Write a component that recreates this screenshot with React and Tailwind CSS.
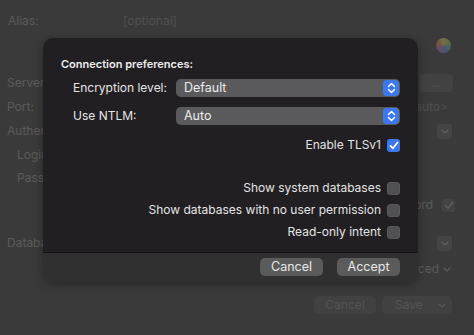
import React from "react";

const font = { fontFamily: "Inter, 'Noto Sans', sans-serif" };

function Stepper() {
  return (
    <div className="w-[16px] h-[16px] rounded-[4px] bg-[#3a78ec] flex items-center justify-center">
      <svg width="9" height="12" viewBox="0 0 9 12" fill="none">
        <path d="M1.5 4.5 L4.5 1.5 L7.5 4.5" stroke="white" strokeWidth="1.5" strokeLinecap="round" strokeLinejoin="round" />
        <path d="M1.5 7.5 L4.5 10.5 L7.5 7.5" stroke="white" strokeWidth="1.5" strokeLinecap="round" strokeLinejoin="round" />
      </svg>
    </div>
  );
}

function Popup({ value }) {
  return (
    <div className="flex-1 h-[18px] rounded-[5px] bg-[#5a5a5c] flex items-center justify-between pl-[8px] pr-[1px]">
      <span className="text-[12.5px] text-[#ececec] leading-none">{value}</span>
      <Stepper />
    </div>
  );
}

function Check({ checked }) {
  if (checked) {
    return (
      <div className="w-[13px] h-[13px] rounded-[3px] bg-[#3a78ec] flex items-center justify-center">
        <svg width="10" height="9" viewBox="0 0 10 9" fill="none">
          <path d="M1.5 4.8 L4 7.3 L8.5 1.5" stroke="white" strokeWidth="1.7" strokeLinecap="round" strokeLinejoin="round" />
        </svg>
      </div>
    );
  }
  return <div className="w-[13px] h-[13px] rounded-[3px] bg-[#504f51] border border-[#59585a]" />;
}

function CheckRow({ label, checked }) {
  return (
    <div className="flex items-center justify-end gap-[6px] h-[16px]">
      <span className="text-[12px] text-[#e4e4e4] leading-none">{label}</span>
      <Check checked={checked} />
    </div>
  );
}

function DimChevronBtn() {
  return (
    <div className="w-[15px] h-[15px] rounded-[3px] bg-[#444] flex items-center justify-center">
      <svg width="8" height="5" viewBox="0 0 8 5" fill="none">
        <path d="M1 1 L4 4 L7 1" stroke="#5e5e5e" strokeWidth="1.3" strokeLinecap="round" strokeLinejoin="round" />
      </svg>
    </div>
  );
}

export default function App() {
  const dim = "text-[12px] text-[#5a5a5a] leading-none";
  return (
    <div className="relative w-[474px] h-[335px] overflow-hidden bg-[#3a3a3a]" style={font}>
      {/* background window content (dimmed) */}
      <div className="flex flex-col pt-[9px]">
        <div className="h-[24px] flex items-center pl-[8px]">
          <span className={dim + " w-[115px]"}>Alias:</span>
          <span className="text-[12px] text-[#505050] leading-none">[optional]</span>
        </div>
        <div className="h-[24px] flex items-center justify-end pr-[23px]">
          <div className="w-[15px] h-[15px] rounded-full opacity-35" style={{ background: "conic-gradient(#e6d24a, #7fd06a, #5a8ce0, #b06ad0, #e07a5a, #e6d24a)" }} />
        </div>
        <div className="h-[14px]" />
        <div className="h-[24px] flex items-center justify-between pl-[7px] pr-[21px]">
          <span className={dim}>Server</span>
          <div className="w-[33px] h-[18px] rounded-[4px] bg-[#424242] flex items-center justify-center text-[11px] text-[#585858] leading-none">...</div>
        </div>
        <div className="h-[24px] flex items-center justify-between pl-[7px] pr-[26px]">
          <span className={dim}>Port:</span>
          <span className="text-[12px] text-[#4e4e4e] leading-none">&lt;auto&gt;</span>
        </div>
        <div className="h-[24px] flex items-center justify-between pl-[7px] pr-[22px]">
          <span className={dim}>Authentication:</span>
          <DimChevronBtn />
        </div>
        <div className="h-[23px] flex items-center pl-[17px]">
          <span className={dim}>Login:</span>
        </div>
        <div className="h-[24px] flex items-center pl-[17px]">
          <span className={dim}>Password:</span>
        </div>
        <div className="h-[3px]" />
        <div className="h-[24px] flex items-center justify-end gap-[9px] pr-[19px]">
          <span className={dim}>Save password</span>
          <div className="w-[13px] h-[13px] rounded-[3px] bg-[#434343] flex items-center justify-center">
            <svg width="10" height="9" viewBox="0 0 10 9" fill="none">
              <path d="M1.5 4.8 L4 7.3 L8.5 1.5" stroke="#5c5c5c" strokeWidth="1.6" strokeLinecap="round" strokeLinejoin="round" />
            </svg>
          </div>
        </div>
        <div className="h-[14px]" />
        <div className="h-[24px] flex items-center justify-between pl-[7px] pr-[22px]">
          <span className={dim}>Database:</span>
          <DimChevronBtn />
        </div>
        <div className="h-[2px]" />
        <div className="h-[24px] flex items-center justify-end gap-[4px] pr-[23px]">
          <span className={dim}>Advanced</span>
          <svg width="8" height="5" viewBox="0 0 8 5" fill="none">
            <path d="M1 1 L4 4 L7 1" stroke="#5a5a5a" strokeWidth="1.3" strokeLinecap="round" strokeLinejoin="round" />
          </svg>
        </div>
        <div className="h-[15px]" />
        <div className="h-[18px] flex items-center justify-end gap-[6px] pr-[22px]">
          <div className="w-[62px] h-[18px] rounded-[5px] bg-[#414141] flex items-center justify-center">
            <span className="text-[12px] text-[#535353] leading-none">Cancel</span>
          </div>
          <div className="w-[70px] h-[18px] rounded-[5px] bg-[#414141] flex items-center justify-between pl-[13px] pr-[6px]">
            <span className="text-[12px] text-[#535353] leading-none">Save</span>
            <svg width="8" height="5" viewBox="0 0 8 5" fill="none">
              <path d="M1 1 L4 4 L7 1" stroke="#555" strokeWidth="1.3" strokeLinecap="round" strokeLinejoin="round" />
            </svg>
          </div>
        </div>
      </div>

      {/* sheet */}
      <div className="absolute left-[43px] top-[38px] w-[375px] h-[244px] rounded-[10px] overflow-hidden flex flex-col shadow-[0_2px_10px_rgba(0,0,0,0.35)]">
        <div className="h-[215px] bg-[#211f22] border-b border-[#141314] flex flex-col pl-[18px] pr-[18px]">
          <div className="h-[18px]" />
          <div className="h-[16px] flex items-center">
            <span className="text-[11px] font-semibold text-[#ededed] leading-none">Connection preferences:</span>
          </div>
          <div className="h-[7px]" />
          <div className="flex items-center h-[18px]">
            <span className="w-[115px] pl-[12px] text-[12px] text-[#e6e6e6] leading-none">Encryption level:</span>
            <Popup value="Default" />
          </div>
          <div className="h-[10px]" />
          <div className="flex items-center h-[18px]">
            <span className="w-[115px] pl-[12px] text-[12px] text-[#e6e6e6] leading-none">Use NTLM:</span>
            <Popup value="Auto" />
          </div>
          <div className="h-[12px]" />
          <CheckRow label="Enable TLSv1" checked />
          <div className="h-[27px]" />
          <CheckRow label="Show system databases" />
          <div className="h-[6px]" />
          <CheckRow label="Show databases with no user permission" />
          <div className="h-[6px]" />
          <CheckRow label="Read-only intent" />
        </div>
        <div className="flex-1 bg-[#303030] flex items-start justify-end gap-[14px] pt-[5px] pr-[18px]">
          <div className="w-[63px] h-[18px] rounded-[5px] bg-[#5b5b5b] flex items-center justify-center">
            <span className="text-[12.5px] text-[#e8e8e8] leading-none">Cancel</span>
          </div>
          <div className="w-[63px] h-[18px] rounded-[5px] bg-[#5b5b5b] flex items-center justify-center">
            <span className="text-[12.5px] text-[#e8e8e8] leading-none">Accept</span>
          </div>
        </div>
      </div>
    </div>
  );
}
